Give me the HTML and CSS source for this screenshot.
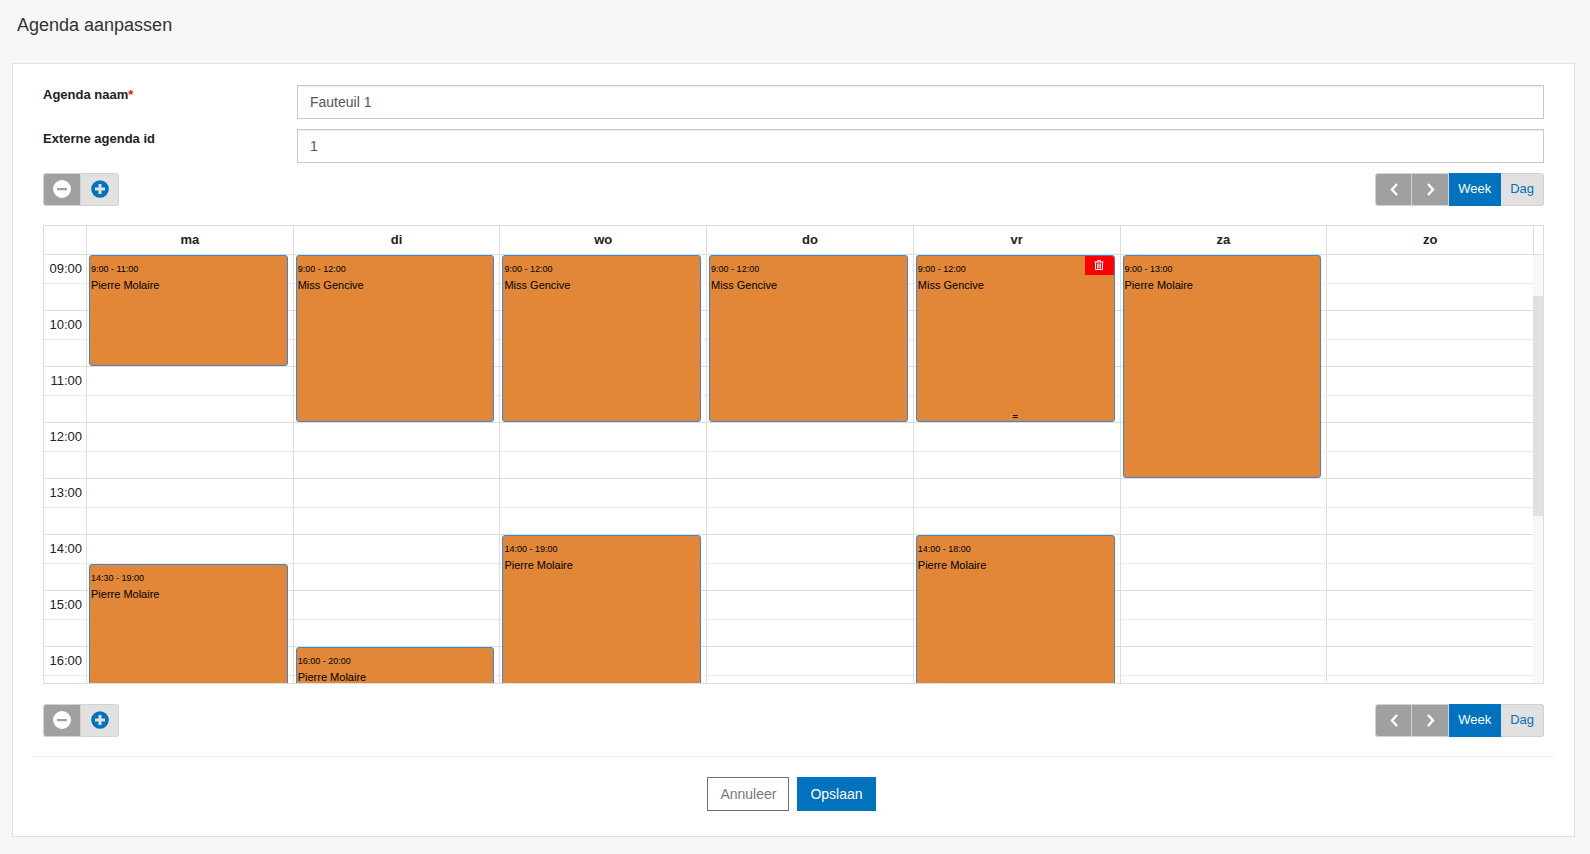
FILE: index.html
```html
<!DOCTYPE html>
<html lang="nl">
<head>
    <meta charset="UTF-8">
    <meta name="viewport" content="width=device-width, initial-scale=1.0">
    <title>Agenda aanpassen</title>
    <link rel="stylesheet" href="styles.css">
</head>
<body>
    <!-- icons -->
    <svg class="sprite" aria-hidden="true">
        <symbol id="icon-minus" viewBox="0 0 18 18">
            <path fill-rule="evenodd" d="M9 0a9 9 0 1 0 0 18A9 9 0 0 0 9 0zM4 8h10v2.200H4z"/>
        </symbol>
        <symbol id="icon-plus" viewBox="0 0 18 18">
            <path fill-rule="evenodd" d="M9 .2a8.800 8.800 0 1 0 0 17.600A8.800 8.800 0 0 0 9 .2zM7.500 4h3v3.500H14v3h-3.500V14h-3v-3.500H4v-3h3.500z"/>
        </symbol>
        <symbol id="icon-prev" viewBox="0 0 14 14">
            <path d="M10 2L5 7.500L10 13" fill="none" stroke="currentColor" stroke-width="2.400"/>
        </symbol>
        <symbol id="icon-next" viewBox="0 0 14 14">
            <path d="M5 2L10 7.500L5 13" fill="none" stroke="currentColor" stroke-width="2.400"/>
        </symbol>
        <symbol id="icon-trash" viewBox="0 0 10 10">
            <path d="M.5 2h9M3.500 2V.5h3V2M1.500 2v7.500h7V2M3.500 3.500v5M5 3.500v5M6.500 3.500v5" fill="none" stroke="currentColor"/>
        </symbol>
    </svg>

    <h1 class="page-title">Agenda aanpassen</h1>

    <form class="panel">
        <div class="form-row">
            <label for="agendaName">Agenda naam<span class="required">*</span></label>
            <input type="text" id="agendaName" class="form-control" value="Fauteuil 1">
        </div>
        <div class="form-row">
            <label for="externalId">Externe agenda id</label>
            <input type="text" id="externalId" class="form-control" value="1">
        </div>

        <div class="toolbar">
            <div class="btn-group">
                <button type="button" class="tool-btn dark" aria-label="Uitzoomen"><svg class="icon-zoom"><use href="#icon-minus"/></svg></button>
                <button type="button" class="tool-btn zoom-in" aria-label="Inzoomen"><svg class="icon-zoom"><use href="#icon-plus"/></svg></button>
            </div>
            <div class="btn-group">
                <button type="button" class="tool-btn dark" aria-label="Vorige"><svg class="icon-nav"><use href="#icon-prev"/></svg></button>
                <button type="button" class="tool-btn dark" aria-label="Volgende"><svg class="icon-nav"><use href="#icon-next"/></svg></button>
                <button type="button" class="tool-btn active">Week</button>
                <button type="button" class="tool-btn">Dag</button>
            </div>
        </div>

        <div class="calendar">
            <table class="cal-head">
                <tr>
                    <th class="axis"></th>
                    <th>ma</th>
                    <th>di</th>
                    <th>wo</th>
                    <th>do</th>
                    <th>vr</th>
                    <th>za</th>
                    <th>zo</th>
                    <th class="gutter"></th>
                </tr>
            </table>
            <div class="cal-body">
                <div class="cal-grid">
                    <table class="slots">
                        <tr><th class="axis">09:00</th><td></td></tr>
                        <tr class="half"><th class="axis"></th><td></td></tr>
                        <tr><th class="axis">10:00</th><td></td></tr>
                        <tr class="half"><th class="axis"></th><td></td></tr>
                        <tr><th class="axis">11:00</th><td></td></tr>
                        <tr class="half"><th class="axis"></th><td></td></tr>
                        <tr><th class="axis">12:00</th><td></td></tr>
                        <tr class="half"><th class="axis"></th><td></td></tr>
                        <tr><th class="axis">13:00</th><td></td></tr>
                        <tr class="half"><th class="axis"></th><td></td></tr>
                        <tr><th class="axis">14:00</th><td></td></tr>
                        <tr class="half"><th class="axis"></th><td></td></tr>
                        <tr><th class="axis">15:00</th><td></td></tr>
                        <tr class="half"><th class="axis"></th><td></td></tr>
                        <tr><th class="axis">16:00</th><td></td></tr>
                        <tr class="half"><th class="axis"></th><td></td></tr>
                    </table>
                    <table class="days">
                        <tr>
                            <td class="axis"></td>
                            <td>
                                <div class="day">
                                    <div class="event" style="top: 0; height: 111px">
                                        <div class="event-time">9:00 - 11:00</div>
                                        <div class="event-title">Pierre Molaire</div>
                                    </div>
                                    <div class="event" style="top: 309px; height: 250px">
                                        <div class="event-time">14:30 - 19:00</div>
                                        <div class="event-title">Pierre Molaire</div>
                                    </div>
                                </div>
                            </td>
                            <td>
                                <div class="day">
                                    <div class="event" style="top: 0; height: 167px">
                                        <div class="event-time">9:00 - 12:00</div>
                                        <div class="event-title">Miss Gencive</div>
                                    </div>
                                    <div class="event" style="top: 392px; height: 223px">
                                        <div class="event-time">16:00 - 20:00</div>
                                        <div class="event-title">Pierre Molaire</div>
                                    </div>
                                </div>
                            </td>
                            <td>
                                <div class="day">
                                    <div class="event" style="top: 0; height: 167px">
                                        <div class="event-time">9:00 - 12:00</div>
                                        <div class="event-title">Miss Gencive</div>
                                    </div>
                                    <div class="event" style="top: 280px; height: 279px">
                                        <div class="event-time">14:00 - 19:00</div>
                                        <div class="event-title">Pierre Molaire</div>
                                    </div>
                                </div>
                            </td>
                            <td>
                                <div class="day">
                                    <div class="event" style="top: 0; height: 167px">
                                        <div class="event-time">9:00 - 12:00</div>
                                        <div class="event-title">Miss Gencive</div>
                                    </div>
                                </div>
                            </td>
                            <td>
                                <div class="day">
                                    <div class="event" style="top: 0; height: 167px">
                                        <div class="event-time">9:00 - 12:00</div>
                                        <div class="event-title">Miss Gencive</div>
                                        <button type="button" class="event-delete" aria-label="Verwijderen"><svg class="icon-trash"><use href="#icon-trash"/></svg></button>
                                        <div class="event-resizer">=</div>
                                    </div>
                                    <div class="event" style="top: 280px; height: 223px">
                                        <div class="event-time">14:00 - 18:00</div>
                                        <div class="event-title">Pierre Molaire</div>
                                    </div>
                                </div>
                            </td>
                            <td>
                                <div class="day">
                                    <div class="event" style="top: 0; height: 223px">
                                        <div class="event-time">9:00 - 13:00</div>
                                        <div class="event-title">Pierre Molaire</div>
                                    </div>
                                </div>
                            </td>
                            <td><div class="day"></div></td>
                        </tr>
                    </table>
                </div>
                <div class="scrollbar"><div class="scroll-thumb"></div></div>
            </div>
        </div>

        <div class="toolbar">
            <div class="btn-group">
                <button type="button" class="tool-btn dark" aria-label="Uitzoomen"><svg class="icon-zoom"><use href="#icon-minus"/></svg></button>
                <button type="button" class="tool-btn zoom-in" aria-label="Inzoomen"><svg class="icon-zoom"><use href="#icon-plus"/></svg></button>
            </div>
            <div class="btn-group">
                <button type="button" class="tool-btn dark" aria-label="Vorige"><svg class="icon-nav"><use href="#icon-prev"/></svg></button>
                <button type="button" class="tool-btn dark" aria-label="Volgende"><svg class="icon-nav"><use href="#icon-next"/></svg></button>
                <button type="button" class="tool-btn active">Week</button>
                <button type="button" class="tool-btn">Dag</button>
            </div>
        </div>

        <hr class="divider">

        <div class="actions">
            <button type="button" class="btn btn-default">Annuleer</button>
            <button type="submit" class="btn btn-primary">Opslaan</button>
        </div>
    </form>
</body>
</html>
```

FILE: styles.css
```css
* {
    box-sizing: border-box;
}

body {
    margin: 0;
    padding: 0 15px 17px 12px;
    background: #f7f7f7;
    color: #222;
    font-family: "Liberation Sans", Arial, sans-serif;
    font-size: 13px;
    line-height: 20px;
}

button,
input {
    font-family: inherit;
}

.sprite {
    display: none;
}

.page-title {
    margin: 0;
    padding: 15px 5px 28px;
    color: #333;
    font-size: 18px;
    font-weight: normal;
    line-height: 20px;
}

.panel {
    padding: 21px 30px 25px;
    background: #fff;
    border: 1px solid #e1e1e1;
}

/* form */
.form-row {
    display: flex;
    margin-bottom: 10px;
}

.form-row label {
    width: 254px;
    font-weight: bold;
}

.required {
    color: #f00;
}

.form-control {
    flex: 1;
    height: 34px;
    padding: 6px 12px;
    background: #fff;
    border: 1px solid #c8c8c8;
    box-shadow: inset 0 1px 1px rgba(0, 0, 0, 0.08);
    color: #555;
    font-size: 14px;
}

/* toolbar */
.toolbar {
    display: flex;
    justify-content: space-between;
}

.btn-group {
    display: flex;
    height: 33px;
}

.tool-btn {
    display: flex;
    align-items: center;
    justify-content: center;
    min-width: 37px;
    padding: 0 9px 2px;
    background: #e1e1e1;
    border: 1px solid #d2d2d2;
    border-left-width: 0;
    color: #0072be;
    font-size: 13px;
    cursor: pointer;
}

.tool-btn:first-child {
    border-left-width: 1px;
    border-radius: 3px 0 0 3px;
}

.tool-btn:last-child {
    border-radius: 0 3px 3px 0;
}

.tool-btn.dark {
    background: #a0a0a0;
    color: #fff;
}

.tool-btn.active {
    background: #0072be;
    border-color: #0072be;
    color: #fff;
}

.tool-btn.zoom-in {
    min-width: 38px;
}

.icon-zoom {
    width: 18px;
    height: 18px;
    fill: currentColor;
}

.icon-nav {
    width: 14px;
    height: 14px;
}

/* calendar */
.calendar {
    margin: 19px 0 20px;
    border: 1px solid #ddd;
}

.calendar table {
    width: 100%;
    table-layout: fixed;
    border-spacing: 0;
}

.calendar th,
.calendar td {
    padding: 0;
}

.calendar .axis {
    width: 42px;
    border-left: 0;
}

.cal-head th {
    height: 29px;
    border-left: 1px solid #ddd;
    border-bottom: 1px solid #ddd;
}

.cal-head .gutter {
    width: 10px;
}

.cal-body {
    display: flex;
    height: 428px;
    overflow: hidden;
}

.cal-grid {
    position: relative;
    flex: 1;
}

.slots th,
.slots td {
    height: 29px;
    border-top: 1px solid #ddd;
}

.slots tr:first-child th,
.slots tr:first-child td {
    height: 28px;
    border-top: 0;
}

.slots .half th,
.slots .half td {
    height: 27px;
    border-top-style: dotted;
}

.calendar .slots .axis {
    padding-right: 4px;
    font-weight: normal;
    text-align: right;
}

/* day columns lie over the time slots */
.days {
    position: absolute;
    top: 0;
    left: 0;
    height: 100%;
}

.days td {
    border-left: 1px solid #ddd;
    vertical-align: top;
}

.day {
    position: relative;
    height: 100%;
    margin: 0 5px 0 2px;
}

.event {
    position: absolute;
    left: 0;
    right: 0;
    padding: 5px 1px 0;
    overflow: hidden;
    background: #e18737;
    border: 1px solid #3a87d2;
    border-radius: 3px;
    color: #000;
    font-size: 11px;
}

.event-time {
    font-size: 9px;
    line-height: 17px;
}

.event-title {
    line-height: 15px;
}

.event-delete {
    position: absolute;
    top: 0;
    right: 0;
    display: flex;
    align-items: center;
    justify-content: center;
    width: 29px;
    height: 19px;
    padding: 0 0 2px;
    background: #f00;
    border: 0;
    color: #fff;
    cursor: pointer;
}

.icon-trash {
    width: 10px;
    height: 10px;
}

.event-resizer {
    position: absolute;
    right: 0;
    bottom: 0;
    left: 0;
    font-size: 9px;
    font-weight: bold;
    line-height: 7px;
    text-align: center;
    cursor: s-resize;
}

.scrollbar {
    width: 10px;
    background: #f7f7f7;
}

.scroll-thumb {
    height: 220px;
    margin-top: 41px;
    background: #e1e1e1;
}

/* footer */
.divider {
    margin: 19px -10px 20px;
    border: 0;
    border-top: 1px solid #eee;
}

.actions {
    display: flex;
    justify-content: center;
    gap: 8px;
    padding-right: 4px;
}

.btn {
    height: 34px;
    padding: 0 12px;
    border: 1px solid #0072be;
    font-size: 14px;
    cursor: pointer;
}

.btn-default {
    background: #fff;
    border-color: #6e6e6e;
    color: #777;
}

.btn-primary {
    background: #0072be;
    color: #fff;
}
```
